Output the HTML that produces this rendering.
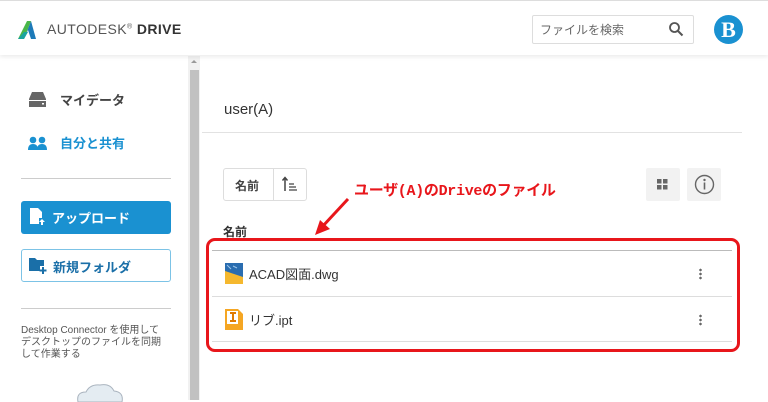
<!DOCTYPE html>
<html><head><meta charset="utf-8"><style>
*{box-sizing:border-box;margin:0;padding:0}
body{width:768px;height:400px;overflow:hidden;background:#fff;font-family:"Liberation Sans","Noto Sans CJK JP",sans-serif;position:relative;color:#333}
.abs{position:absolute}
.hdr{left:0;top:0;width:768px;height:55px;background:#fff;border-top:1px solid #ddd;box-shadow:0 2px 4px rgba(0,0,0,.08);z-index:2}
.t{white-space:nowrap}
</style></head><body>
<div class="abs hdr">
 <svg class="abs" style="left:16px;top:19px" width="22" height="20" viewBox="0 0 22 20"><path d="M2 19 L11 1 L15 1 L8 19Z" fill="#49b649"/><path d="M8 19 L15 1 L20 19 L15 19 L12 10Z" fill="#1d7ab8"/><path d="M2 19 L8 12 L12 12 L8 19Z" fill="#1aa3a0"/></svg>
 <div class="abs t" style="left:47px;top:20px;font-size:14px;color:#555;letter-spacing:.4px">AUTODESK<sup style="font-size:7px">®</sup> <b style="color:#333">DRIVE</b></div>
 <div class="abs" style="left:532px;top:14px;width:162px;height:29px;border:1px solid #ddd;border-radius:2px"></div>
 <div class="abs t" style="left:540px;top:20px;font-size:12px;color:#666">ファイルを検索</div>
 <svg class="abs" style="left:668px;top:20px" width="16" height="16" viewBox="0 0 16 16"><circle cx="6.5" cy="6.5" r="4.5" fill="none" stroke="#555" stroke-width="1.8"/><path d="M10 10 L14.5 14.5" stroke="#555" stroke-width="2"/></svg>
 <div class="abs" style="left:714px;top:14px;width:29px;height:29px;border-radius:50%;background:#1a91d1;color:#fff;font-family:'Liberation Serif',serif;font-weight:bold;font-size:22px;text-align:center;line-height:29px">B</div>
</div>
<!-- sidebar -->
<svg class="abs" style="left:29px;top:92px" width="17" height="15" viewBox="0 0 17 15"><path d="M3 0 H14 L17 7 V15 H0 V7Z" fill="#666"/><rect x="0" y="8" width="17" height="1" fill="#fff"/><rect x="13" y="11" width="2" height="1.5" fill="#fff"/></svg>
<div class="abs t" style="left:60px;top:90px;font-size:13px;color:#444;font-weight:bold">マイデータ</div>
<svg class="abs" style="left:28px;top:136px" width="20" height="14" viewBox="0 0 20 14"><circle cx="5" cy="4" r="3.3" fill="#1a91d1"/><circle cx="14" cy="4" r="3.3" fill="#1a91d1"/><path d="M0 14 Q0 8 5 8 Q10 8 10 14Z M9 14 Q9 8 14 8 Q19 8 19 14Z" fill="#1a91d1"/></svg>
<div class="abs t" style="left:60px;top:133px;font-size:13px;color:#1a91d1;font-weight:bold">自分と共有</div>
<div class="abs" style="left:21px;top:178px;width:150px;height:1px;background:#ccc"></div>
<div class="abs" style="left:21px;top:201px;width:150px;height:33px;background:#1a91d1;border-radius:3px"></div>
<svg class="abs" style="left:30px;top:208px" width="15" height="18" viewBox="0 0 15 18"><path d="M0 0 H8 L12 4 V10 H9 V16 H0Z" fill="#fff"/><path d="M12 11 L15 14 H13 V17 H11 V14 H9Z" fill="#fff"/></svg>
<div class="abs t" style="left:52px;top:208px;font-size:13px;color:#fff;font-weight:bold">アップロード</div>
<div class="abs" style="left:21px;top:249px;width:150px;height:33px;border:1.5px solid #7cc3e6;border-radius:3px"></div>
<svg class="abs" style="left:29px;top:257px" width="18" height="17" viewBox="0 0 18 17"><path d="M0 1 H6 L8 3 H15 V9 H11 V14 H0Z" fill="#1a6fa8"/><path d="M14 10 V17 M10.5 13.5 H17.5" stroke="#1a6fa8" stroke-width="2"/></svg>
<div class="abs t" style="left:53px;top:257px;font-size:13px;color:#1a6fa8;font-weight:bold">新規フォルダ</div>
<div class="abs" style="left:21px;top:308px;width:150px;height:1px;background:#ccc"></div>
<div class="abs" style="left:21px;top:325px;width:152px;font-size:10px;line-height:12px;color:#555">Desktop Connector を使用して<br>デスクトップのファイルを同期<br>して作業する</div>
<svg class="abs" style="left:74px;top:382px" width="52" height="20" viewBox="0 0 52 20"><path d="M4 20 Q2 10 12 10 Q16 2 26 3 Q36 1 40 9 Q50 10 48 20Z" fill="#e4ecf2" stroke="#aab4bf" stroke-width="1"/></svg>
<!-- scrollbar -->
<div class="abs" style="left:188px;top:56px;width:12px;height:344px;background:#f1f1f1"></div>
<div class="abs" style="left:190px;top:70px;width:9px;height:330px;background:#c1c1c1"></div>
<div class="abs" style="left:191px;top:60px;width:0;height:0;border-left:3px solid transparent;border-right:3px solid transparent;border-bottom:3px solid #999"></div>
<!-- main -->
<div class="abs t" style="left:224px;top:101px;font-size:15px;color:#333">user(A)</div>
<div class="abs" style="left:202px;top:132px;width:540px;height:1px;background:#e2e2e2"></div>
<div class="abs" style="left:223px;top:168px;width:84px;height:33px;border:1px solid #ddd;border-radius:3px"></div>
<div class="abs" style="left:273px;top:169px;width:1px;height:31px;background:#ddd"></div>
<div class="abs t" style="left:235px;top:177px;font-size:12px;color:#444;font-weight:bold">名前</div>
<svg class="abs" style="left:282px;top:176px" width="16" height="16" viewBox="0 0 16 16"><path d="M3 15 V2 M0.5 4.5 L3 1.5 L5.5 4.5" stroke="#444" stroke-width="1.5" fill="none"/><path d="M7 8 H12 M7 11 H14 M7 14 H15" stroke="#444" stroke-width="1.3"/></svg>
<div class="abs" style="left:646px;top:168px;width:34px;height:33px;background:#f2f2f2;border-radius:2px"></div>
<svg class="abs" style="left:657px;top:179px" width="11" height="11" viewBox="0 0 11 11"><rect x="0" y="0" width="4.5" height="4.5" fill="#666"/><rect x="6" y="0" width="4.5" height="4.5" fill="#666"/><rect x="0" y="6" width="4.5" height="4.5" fill="#666"/><rect x="6" y="6" width="4.5" height="4.5" fill="#666"/></svg>
<div class="abs" style="left:687px;top:168px;width:34px;height:33px;background:#f2f2f2;border-radius:2px"></div>
<svg class="abs" style="left:694px;top:174px" width="21" height="21" viewBox="0 0 21 21"><circle cx="10.5" cy="10.5" r="9" fill="none" stroke="#666" stroke-width="1.4"/><circle cx="10.5" cy="6" r="1.2" fill="#666"/><rect x="9.7" y="8.5" width="1.6" height="7" fill="#666"/></svg>
<div class="abs t" style="left:354px;top:179px;font-size:15px;color:#e8161b;font-weight:bold;font-family:'Liberation Mono','Noto Sans CJK JP',monospace;letter-spacing:-0.3px">ユーザ(A)のDriveのファイル</div>
<svg class="abs" style="left:312px;top:196px" width="40" height="42" viewBox="0 0 40 42"><path d="M36 3 L10 31" stroke="#e8161b" stroke-width="3"/><path d="M3 39 L8 24 L18 33Z" fill="#e8161b"/></svg>
<div class="abs t" style="left:223px;top:223px;font-size:12px;color:#333;font-weight:bold">名前</div>
<div class="abs" style="left:212px;top:250px;width:520px;height:1px;background:#bbb"></div>
<svg class="abs" style="left:225px;top:263px" width="18" height="21" viewBox="0 0 18 21"><rect width="18" height="21" fill="#f5b82e"/><path d="M0 0 H18 V14 L0 8Z" fill="#2a6db0"/><path d="M2 2 L6 6 M8 3 L12 5" stroke="#9cc6ea" stroke-width="1"/></svg>
<div class="abs t" style="left:249px;top:264px;font-size:13px;color:#333">ACAD図面.dwg</div>
<div class="abs" style="left:699px;top:268px;width:3px;height:12px;background:radial-gradient(circle,#666 1.2px,transparent 1.4px) 0 0/3px 4px"></div>
<div class="abs" style="left:212px;top:296px;width:520px;height:1px;background:#ddd"></div>
<svg class="abs" style="left:225px;top:309px" width="18" height="21" viewBox="0 0 18 21"><path d="M0 0 H13 L18 5 V21 H0Z" fill="#f5a623"/><rect x="2" y="2" width="11" height="13" fill="#fff"/><path d="M5 4 H11 M8 4 V12 M5 12 H11" stroke="#e07b00" stroke-width="2"/></svg>
<div class="abs t" style="left:249px;top:310px;font-size:13px;color:#333">リブ.ipt</div>
<div class="abs" style="left:699px;top:314px;width:3px;height:12px;background:radial-gradient(circle,#666 1.2px,transparent 1.4px) 0 0/3px 4px"></div>
<div class="abs" style="left:212px;top:341px;width:520px;height:1px;background:#ddd"></div>
<div class="abs" style="left:206px;top:238px;width:534px;height:114px;border:3px solid #e8161b;border-radius:9px"></div>
</body></html>
